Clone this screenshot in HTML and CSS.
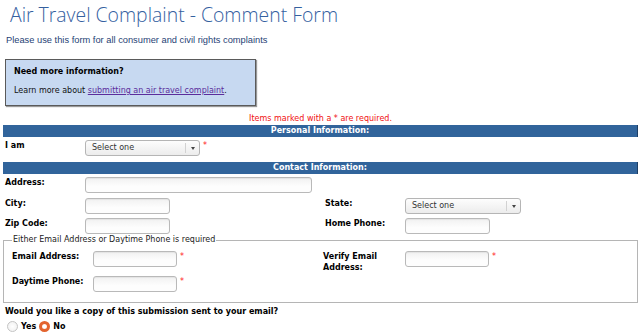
FILE: index.html
```html
<!DOCTYPE html>
<html>
<head>
<meta charset="utf-8">
<link rel="stylesheet" href="styles.css">
</head>
<body>
<div class="page">
  <h1 class="title">Air Travel Complaint - Comment Form</h1>
  <p class="subtitle">Please use this form for all consumer and civil rights complaints</p>
  <div class="infobox">
    <p class="info-head">Need more information?</p>
    <p class="info-text">Learn more about <a href="#">submitting an air travel complaint</a>.</p>
  </div>
  <p class="required-note">Items marked with a * are required.</p>

  <div class="bar">Personal Information:</div>
  <div class="row personal">
    <span class="lbl c1">I am</span>
    <div class="field c2"><div class="select w115"><span class="sel-text">Select one</span><span class="sel-arrow"></span></div><span class="req">*</span></div>
  </div>

  <div class="bar">Contact Information:</div>
  <div class="contact">
    <div class="row">
      <span class="lbl c1">Address:</span>
      <div class="field c2"><input class="input w227" type="text"></div>
    </div>
    <div class="row">
      <span class="lbl c1">City:</span>
      <div class="field c2"><input class="input w85" type="text"></div>
      <span class="lbl c3">State:</span>
      <div class="field"><div class="select w116"><span class="sel-text">Select one</span><span class="sel-arrow"></span></div></div>
    </div>
    <div class="row">
      <span class="lbl c1">Zip Code:</span>
      <div class="field c2"><input class="input w85" type="text"></div>
      <span class="lbl c3">Home Phone:</span>
      <div class="field"><input class="input w85" type="text"></div>
    </div>
  </div>

  <fieldset class="either">
    <legend>Either Email Address or Daytime Phone is required</legend>
    <div class="inner">
      <div class="row">
        <span class="lbl i1">Email Address:</span>
        <div class="field i2"><input class="input w84" type="text"><span class="req">*</span></div>
        <span class="lbl c3 narrow">Verify Email Address:</span>
        <div class="field"><input class="input w84" type="text"><span class="req">*</span></div>
      </div>
      <div class="row">
        <span class="lbl i1">Daytime Phone:</span>
        <div class="field i2"><input class="input w84" type="text"><span class="req">*</span></div>
      </div>
    </div>
  </fieldset>

  <p class="question">Would you like a copy of this submission sent to your email?</p>
  <div class="radios">
    <span class="radio"></span><span class="rlbl">Yes</span>
    <span class="radio checked"></span><span class="rlbl">No</span>
  </div>
</div>
</body>
</html>
```
FILE: styles.css
```css
* { box-sizing: border-box; }
html, body { margin: 0; padding: 0; background: #fff; }
body { font-family: "DejaVu Sans", Verdana, sans-serif; font-size: 8px; color: #000; }
.page { width: 640px; padding: 0 2px 0 3px; }
p { margin: 0; }

.title {
  margin: 0 0 0 7px;
  height: 30px;
  line-height: 30px;
  font-family: "Open Sans", sans-serif;
  font-weight: 300;
  font-size: 19.4px;
  color: #34609f;
}
.subtitle {
  margin: 4px 0 0 3px;
  line-height: 12px;
  font-family: "Liberation Sans", Arial, sans-serif;
  font-size: 9.3px;
  color: #1f3f75;
}
.infobox {
  margin: 13px 0 0 2px;
  width: 251px;
  height: 47px;
  background: #c7d9f1;
  border: 1px solid #5a5a5a;
  box-shadow: 1px 1px 1px #999;
  padding: 6px 8px 0 8px;
}
.info-head { font-weight: bold; line-height: 12px; }
.info-text { margin-top: 7px; line-height: 12px; color: #111; }
.info-text a { color: #5b2d9c; }

.required-note {
  margin-top: 7px;
  line-height: 12px;
  text-align: center;
  color: #f01010;
}
.bar {
  height: 12px;
  line-height: 12px;
  background: #31649b;
  border-right: 1px solid #1d3f66;
  color: #fff;
  font-weight: bold;
  text-align: center;
}

.row { display: flex; align-items: flex-start; }
.personal { margin-top: 3px; margin-bottom: 6px; }
.contact { display: flex; flex-direction: column; gap: 4.5px; margin-top: 3px; }
.inner { display: flex; flex-direction: column; gap: 3px; }

.lbl {
  display: block;
  font-weight: bold;
  line-height: 11px;
  padding-left: 2px;
}
.inner .lbl { padding-left: 0; }

.c1 { flex: 0 0 82px; width: 82px; }
.c2 { flex: 0 0 238px; width: 238px; }
.c3 { flex: 0 0 82px; width: 82px; }
.i1 { flex: 0 0 81px; width: 81px; }
.i2 { flex: 0 0 230px; width: 230px; }
.narrow { padding-right: 10px; }

.field { display: flex; align-items: flex-start; justify-content: flex-start; }
.input {
  display: block;
  margin: 0;
  padding: 0;
  font: inherit;
  flex: none;
  height: 16px;
  border: 1px solid #b9b9b9;
  border-radius: 3px;
  background: linear-gradient(#f1f1f1, #fdfdfd 60%);
  box-shadow: inset 0 1px 1px rgba(0,0,0,0.06);
  outline: none;
}
.select {
  flex: none;
  position: relative;
  height: 16px;
  border: 1px solid #b5b5b5;
  border-radius: 3px;
  background: linear-gradient(#fdfdfd, #ececec);
  color: #333;
  line-height: 14px;
}
.sel-text { padding-left: 6px; }
.sel-arrow {
  position: absolute;
  right: 0;
  top: 2px;
  width: 14px;
  height: 10px;
  border-left: 1px solid #d2d2d2;
}
.sel-arrow::after {
  content: "";
  position: absolute;
  left: 5px;
  top: 4px;
  border-left: 2px solid transparent;
  border-right: 2px solid transparent;
  border-top: 3px solid #444;
}
.w115 { width: 115px; }
.w116 { width: 116px; }
.w227 { width: 227px; flex: 0 0 227px; }
.w85 { width: 85px; }
.w84 { width: 84px; }
.req { color: #f22; font-size: 8px; line-height: 10px; margin-left: 3px; margin-top: 1px; }

.either {
  margin: 1px 0 0 0;
  border: 1px solid #b5b5b5;
  padding: 6px 8px 10px 8px;
  min-width: 0;
}
.either legend {
  padding: 0 1px;
  margin-left: 0;
  line-height: 10px;
  color: #222;
}

.question { margin-top: 3px; font-weight: bold; line-height: 11px; padding-left: 2px; }
.radios { display: flex; align-items: center; margin-top: 3px; padding-left: 4px; height: 12px; }
.radio {
  width: 11px;
  height: 11px;
  border-radius: 50%;
  border: 1px solid #c4c4c4;
  background: radial-gradient(#fff, #eee);
}
.radio.checked {
  border: 3px solid #e3642f;
  background: radial-gradient(#fff 40%, #fbd7c6);
  margin-left: 3px;
}
.rlbl { font-weight: bold; margin-left: 3px; }
```
